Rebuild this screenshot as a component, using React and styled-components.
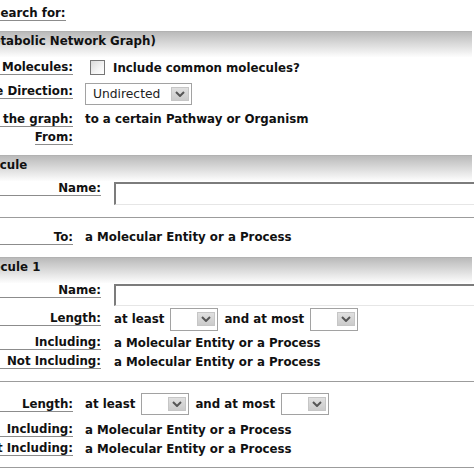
import React from 'react';
import styled, { createGlobalStyle } from 'styled-components';

const GlobalStyle = createGlobalStyle`
  html, body {
    margin: 0;
    padding: 0;
    background: #fff;
    overflow: hidden;
  }
  body {
    font-family: "DejaVu Sans", Verdana, sans-serif;
    font-size: 11.8px;
    font-weight: bold;
    color: #111;
  }
`;

// the form is wider than the window; its left part sits off screen
const Page = styled.div`
  width: 674px;
  margin-left: -200px;
`;

const Heading = styled.div`
  padding: 7px 0 0 192px;
  margin-bottom: 10px;
  line-height: 13px;
  white-space: nowrap;
`;

const Underlined = styled.span`
  display: inline-block;
  border-bottom: 1px solid #8c8c8c;
`;

const Bar = styled.div`
  height: 26px;
  margin-top: ${p => p.$mt || 0}px;
  margin-right: 2px;
  padding: 2px 0 0 ${p => p.$pad}px;
  box-sizing: border-box;
  line-height: 14px;
  white-space: nowrap;
  background: linear-gradient(to bottom, #bababa 0%, #d8d8d8 45%, #fdfdfd 100%);
  border-top: 1px solid #b2b2b2;
`;

const Row = styled.div`
  display: grid;
  grid-template-columns: ${p => (p.$inner ? 301 : 273)}px 1fr;
  column-gap: ${p => (p.$inner ? 13 : 12)}px;
  align-items: center;
  height: ${p => p.$h}px;
  margin-top: ${p => p.$mt || 0}px;
`;

const Label = styled.div`
  display: flex;
  justify-content: flex-end;
  white-space: nowrap;
  line-height: 14px;
  margin-bottom: ${p => (p.$nudge || 0) * 2}px;
`;

const LabelText = styled.span`
  flex: ${p => (p.$short ? '0 0 auto' : '1 1 auto')};
  text-align: right;
  border-bottom: 1px solid #8c8c8c;
`;

const Value = styled.div`
  display: flex;
  align-items: center;
  gap: ${p => p.$gap || 6}px;
  white-space: nowrap;
  line-height: 14px;
  min-width: 0;
`;

const Check = styled.span`
  width: 15px;
  height: 15px;
  margin-left: 5px;
  margin-right: 2px;
  box-sizing: border-box;
  border: 1px solid #767676;
  background: linear-gradient(135deg, #d9d9d9 0%, #f4f4f4 60%, #fff 100%);
`;

const Select = styled.div`
  display: flex;
  align-items: center;
  justify-content: space-between;
  width: ${p => p.$w}px;
  height: ${p => p.$h || 22}px;
  box-sizing: border-box;
  border: 1px solid #a2a2a2;
  background: #fff;
  padding: 0 2px 0 7px;
  font-family: "DejaVu Sans", Tahoma, sans-serif;
  font-weight: normal;
  font-size: 12.3px;
  color: #222;
`;

const Arrow = styled.span`
  display: flex;
  align-items: center;
  justify-content: center;
  width: 18px;
  height: 14px;
  box-sizing: border-box;
  border: 1px solid #c6c6c6;
  background: linear-gradient(to bottom, #e0e0e0, #cbcbcb);
`;

const TextInput = styled.div`
  flex: 1;
  height: ${p => p.$h}px;
  margin-right: -10px;
  box-sizing: border-box;
  border-top: 2px solid #7c7c7c;
  border-left: 2px solid #7c7c7c;
  border-bottom: 1px solid #e6e6e6;
  background: #fff;
`;

const Rule = styled.div`
  height: 1px;
  margin-top: ${p => p.$mt}px;
  background: #9c9c9c;
`;

const Chevron = () => (
  <svg width="10" height="6" viewBox="0 0 10 6">
    <polyline points="1,1 5,5 9,1" fill="none" stroke="#555" strokeWidth="2" />
  </svg>
);

const Dropdown = ({ w, h, children }) => (
  <Select $w={w} $h={h}>
    <span>{children}</span>
    <Arrow><Chevron /></Arrow>
  </Select>
);

const LengthRange = ({ h }) => (
  <Value>
    at least
    <Dropdown w={48} h={h} />
    and at most
    <Dropdown w={48} h={h} />
  </Value>
);

const Field = ({ label, short, nudge, children, ...rest }) => (
  <Row {...rest}>
    <Label $nudge={nudge}>
      <LabelText $short={short}>{label}</LabelText>
    </Label>
    {children || <span />}
  </Row>
);

const ENTITY = 'a Molecular Entity or a Process';

export default function App() {
  return (
    <>
      <GlobalStyle />
      <Page>
        <Heading><Underlined>Search for:</Underlined></Heading>

        <Bar $pad={106}>Path Type (Metabolic Network Graph)</Bar>
        <Field label="Exclude Common Molecules:" $h={21}>
          <Value $gap={6}>
            <Check />
            Include common molecules?
          </Value>
        </Field>
        <Field label="Edge Direction:" $h={32} nudge={3}>
          <Value>
            <Dropdown w={107}>Undirected</Dropdown>
          </Value>
        </Field>
        <Field label="Restrict the graph:" $h={18}>
          <Value>to a certain Pathway or Organism</Value>
        </Field>
        <Field label="From:" short $h={18} />

        <Bar $pad={118} $mt={9}>Source Molecule</Bar>
        <Field label="Name:" $inner $h={25} nudge={5}>
          <Value><TextInput $h={23} /></Value>
        </Field>
        <Rule $mt={11} />
        <Field label="To:" $h={18} $mt={10}>
          <Value>{ENTITY}</Value>
        </Field>

        <Bar $pad={78} $mt={11}>Intermediate Molecule 1</Bar>
        <Field label="Name:" $inner $h={22} nudge={4}>
          <Value><TextInput $h={22} /></Value>
        </Field>
        <Field label="Length:" $inner $h={28} nudge={1}>
          <LengthRange h={23} />
        </Field>
        <Field label="Including:" $inner $h={19}>
          <Value>{ENTITY}</Value>
        </Field>
        <Field label="Not Including:" $inner $h={19}>
          <Value>{ENTITY}</Value>
        </Field>
        <Rule $mt={10} />

        <Field label="Length:" $h={24} $mt={10}>
          <LengthRange h={22} />
        </Field>
        <Field label="Including:" $h={19} $mt={4}>
          <Value>{ENTITY}</Value>
        </Field>
        <Field label="Not Including:" $h={19}>
          <Value>{ENTITY}</Value>
        </Field>
        <Rule $mt={9} />
      </Page>
    </>
  );
}
